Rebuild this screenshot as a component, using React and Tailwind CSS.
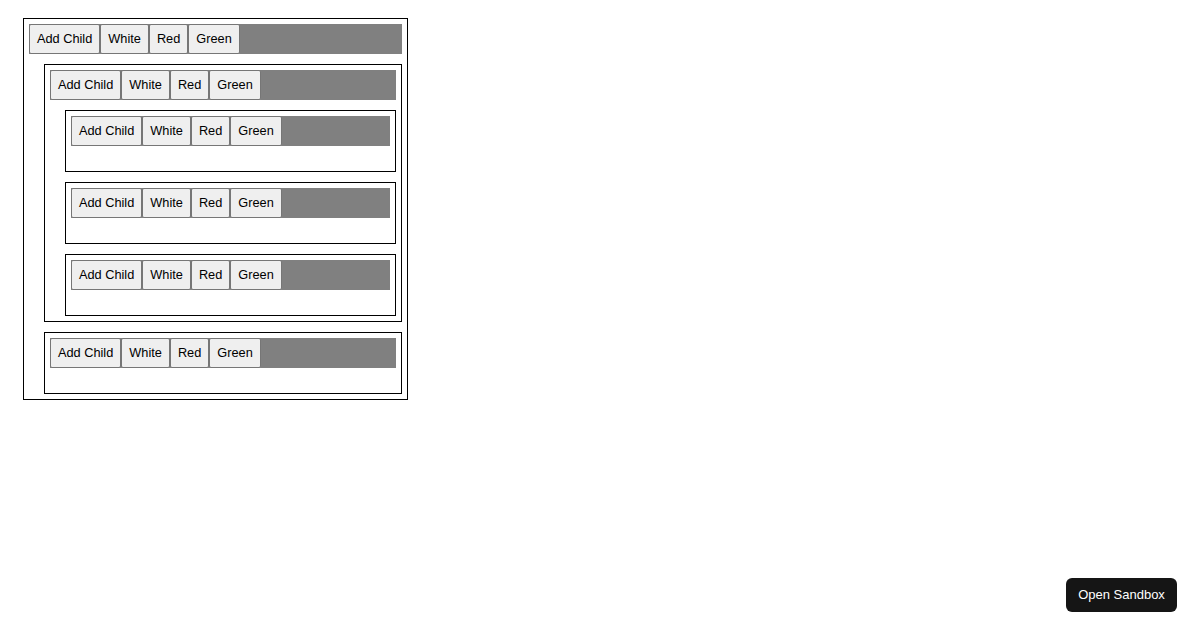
import React, {useState} from 'react';

const btn = 'h-[30px] px-[7px] bg-[#efefef] border border-[#767676] rounded-[2px] text-[12.75px] text-black';

function Node({node}) {
    return (
        <div className="border border-black p-[5px]">
            <div className="flex bg-[#808080] h-[30px]">
                <button className={btn}>Add Child</button>
                <button className={btn}>White</button>
                <button className={btn}>Red</button>
                <button className={btn}>Green</button>
            </div>
            <div className="min-h-[20px] pl-[15px]">
                {node.children.map((c, i) => (
                    <div key={i} className="mt-[10px]">
                        <Node node={c}/>
                    </div>
                ))}
            </div>
        </div>
    );
}

export default function App() {
    const [tree] = useState({
        children: [
            {children: [{children: []}, {children: []}, {children: []}]},
            {children: []}
        ]
    });
    return (
        <div className="w-[1200px] h-[630px] bg-white font-['Liberation_Sans',Arial,sans-serif]">
            <div className="pl-[23px] pt-[18px]">
                <div className="w-[385px]">
                    <Node node={tree}/>
                </div>
            </div>
            <button className="fixed right-[23px] bottom-[18px] w-[111px] h-[34px] rounded-[6px] bg-[#151515] text-white text-[13px]">
                Open Sandbox
            </button>
        </div>
    );
}
